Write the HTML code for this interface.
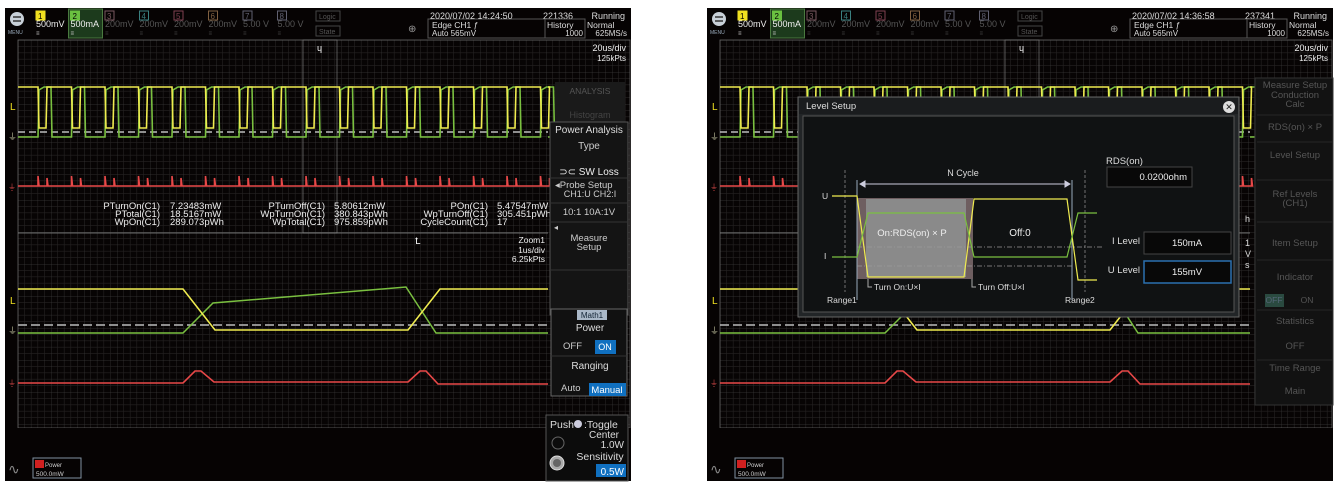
<!DOCTYPE html>
<html><head><meta charset="utf-8">
<style>
html,body{margin:0;padding:0;background:#fff;width:1339px;height:486px;overflow:hidden}
svg{display:block;font-family:"Liberation Sans Narrow","Liberation Sans",sans-serif}
text{font-family:"Liberation Sans Narrow","Liberation Sans",sans-serif}
</style></head><body>
<svg id="s" width="1339" height="486" viewBox="0 0 1339 486" xmlns="http://www.w3.org/2000/svg">
<defs>
<pattern id="g" x="18" y="40" width="33" height="32" patternUnits="userSpaceOnUse">
<rect width="33" height="32" fill="#070404"/>
<path d="M6.6 0V32M13.2 0V32M19.8 0V32M26.4 0V32M0 6.4H33M0 12.8H33M0 19.2H33M0 25.6H33" stroke="#242222" stroke-width="0.6"/>
<path d="M0 0V32M0 0H33" stroke="#3a3a3a" stroke-width="0.7"/>
</pattern>
</defs>
<g id="L"></g>
<g id="R"></g>
</svg>
<script>
const NS="http://www.w3.org/2000/svg";
function el(p,tag,a,txt){const e=document.createElementNS(NS,tag);for(const k in a)e.setAttribute(k,a[k]);if(txt!==undefined)e.textContent=txt;p.appendChild(e);return e;}
function T(p,x,y,s,c,t,anchor,extra){const a={x:x,y:y,'font-size':s,fill:c};if(anchor)a['text-anchor']=anchor;if(extra)Object.assign(a,extra);return el(p,'text',a,t);}
function screen(gid,ox,right){
 const g=document.getElementById(gid);
 g.setAttribute('transform','translate('+ox+',0)');
 el(g,'rect',{x:5,y:8,width:626,height:473,fill:'#060303'});
 el(g,'circle',{cx:17,cy:19,r:7,fill:'#c8d0d8'});
 el(g,'path',{d:'M13 17H21M13 21H21',stroke:'#333','stroke-width':1.6});
 T(g,8,34,5,'#9ab','MENU');
 const chs=[['1','500mV','#f0e020',true],['2','500mA','#6ac040',true],['3','200mV','#7a5a60'],['4','200mV','#3a8080'],['5','200mV','#804050'],['6','200mV','#806040'],['7','5.00 V','#606070'],['8','5.00 V','#606070']];
 chs.forEach((c,i)=>{const x=36+i*34.5;
  if(i==1)el(g,'rect',{x:x-2,y:9,width:34,height:29,fill:'#1c3a1c',stroke:'#4a7a40'});
  el(g,'rect',{x:x,y:11,width:9,height:9,fill:c[3]?c[2]:'none',stroke:c[2]});
  T(g,x+2,19,8,c[3]?'#000':c[2],c[0]);
  T(g,x,27,9,c[3]?'#eee':'#555',c[1]);
  T(g,x,35,6,c[3]?'#ccc':'#444','≡');});
 el(g,'rect',{x:316,y:11,width:24,height:10,fill:'none',stroke:'#444'});T(g,319,19,7,'#555','Logic');
 el(g,'rect',{x:316,y:26,width:24,height:10,fill:'none',stroke:'#444'});T(g,319,34,7,'#555','State');
 T(g,408,32,10,'#999','⊕');
 el(g,'rect',{x:428,y:19,width:117,height:19,fill:'none',stroke:'#555'});
 T(g,430,19,9,'#ddd',right?'2020/07/02 14:36:58':'2020/07/02 14:24:50');
 T(g,432,28,8.5,'#ddd','Edge CH1 ƒ');T(g,432,36,8,'#ddd','Auto 565mV');
 T(g,543,19,9,'#ddd',right?'237341':'221336');T(g,625,19,9,'#ddd','Running','end');
 el(g,'rect',{x:545,y:19,width:40,height:19,fill:'none',stroke:'#555'});
 T(g,547,28,8.5,'#ddd','History');T(g,583,36,8,'#ddd','1000','end');
 T(g,587,28,8.5,'#ddd','Normal');T(g,627,36,8,'#ddd','625MS/s','end');
 el(g,'rect',{x:18,y:40,width:612,height:388,fill:'url(#g)'});
 el(g,'rect',{x:18,y:40,width:612,height:388,fill:'none',stroke:'#666','stroke-width':0.8});
 T(g,626,51,9,'#eee','20us/div','end');T(g,626,61,8,'#eee','125kPts','end');
 el(g,'rect',{x:303,y:40,width:34,height:193,fill:'none',stroke:'#777','stroke-width':0.7});
 T(g,317,51,9,'#fff','ɥ');
 let y='M18 87',gr='M18 137',rd='M18 186';
 for(let i=0;i<16;i++){const c=24+i*33.5;
  y+=` L${c+14} 87 L${c+15} 128 L${c+22} 128 L${c+23} 87`;
  gr+=` L${c+14} 137 L${c+15} 90 L${c+20} 87`; gr+=` L${c+27} 87 L${c+28} 137`;
  rd+=` L${c+14} 186 L${c+14} 176 L${c+15} 186 L${c+23} 186 L${c+23} 178 L${c+24} 186`;}
 y+=' L548 87';gr+=' L548 137';rd+=' L548 186';
 el(g,'path',{d:'M18 132H548',stroke:'#bbb','stroke-width':1.6,'stroke-dasharray':'7 4'});
 el(g,'path',{d:gr,stroke:'#7ac040',fill:'none','stroke-width':1.6});
 el(g,'path',{d:y,stroke:'#f0ec50',fill:'none','stroke-width':1.6});
 el(g,'path',{d:rd,stroke:'#e84848',fill:'none','stroke-width':1.6});
 T(g,10,110,10,'#f0e020','L');T(g,8,140,9,'#bb9','⏚');T(g,8,190,8,'#c44','⏚');
 el(g,'path',{d:'M18 233H548',stroke:'#888','stroke-width':0.8});
 el(g,'path',{d:'M18 325H548',stroke:'#bbb','stroke-width':1.6,'stroke-dasharray':'9 4'});
 el(g,'path',{d:'M18 333 L183 333 L213 303 L406 287 L436 333 L548 333',stroke:'#7ac040',fill:'none','stroke-width':1.5});
 el(g,'path',{d:'M18 289 L183 289 L215 330 L408 330 L440 289 L548 289',stroke:'#f0ec50',fill:'none','stroke-width':1.6});
 el(g,'path',{d:'M18 383 L183 383 L195 371 L201 371 L214 382 L408 382 L420 371 L426 371 L438 384 L548 384',stroke:'#e84848',fill:'none','stroke-width':1.6});
 T(g,10,304,10,'#f0e020','L');T(g,8,334,9,'#bb9','⏚');T(g,8,386,8,'#c44','⏚');
 el(g,'rect',{x:5,y:428,width:626,height:53,fill:'#060303'});
 T(g,8,474,14,'#888','∿');
 el(g,'rect',{x:33,y:458,width:48,height:20,fill:'#060303',stroke:'#8090a0'});
 el(g,'rect',{x:35,y:460,width:9,height:8,fill:'#d02020'});
 T(g,45,467,6,'#ccc','Power');T(g,36,476,6.5,'#ccc','500.0mW');
}
screen('L',0,false);
screen('R',702,true);
const L=document.getElementById('L'),R=document.getElementById('R');
[['PTurnOn(C1)','7.23483mW'],['PTotal(C1)','18.5167mW'],['WpOn(C1)','289.073pWh']].forEach((r,i)=>{T(L,160,209+i*8,9.5,'#eee',r[0],'end');T(L,170,209+i*8,9.5,'#eee',r[1]);});
[['PTurnOff(C1)','5.80612mW'],['WpTurnOn(C1)','380.843pWh'],['WpTotal(C1)','975.859pWh']].forEach((r,i)=>{T(L,325,209+i*8,9.5,'#eee',r[0],'end');T(L,334,209+i*8,9.5,'#eee',r[1]);});
[['POn(C1)','5.47547mW'],['WpTurnOff(C1)','305.451pWh'],['CycleCount(C1)','17']].forEach((r,i)=>{T(L,488,209+i*8,9.5,'#eee',r[0],'end');T(L,497,209+i*8,9.5,'#eee',r[1]);});
T(L,415,244,9,'#fff','Ꝉ');
T(L,545,243,8.5,'#eee','Zoom1','end');T(L,545,253,8.5,'#eee','1us/div','end');T(L,545,262,8.5,'#eee','6.25kPts','end');
el(L,'rect',{x:555,y:82,width:70,height:40,fill:'#1a1a1a'});
T(L,590,94,8.5,'#555','ANALYSIS','middle');T(L,590,118,9,'#444','Histogram','middle');
el(L,'rect',{x:550,y:122,width:78,height:193,fill:'#141414',stroke:'#555'});
T(L,589,133,10,'#ddd','Power Analysis','middle');
T(L,589,149,10,'#ccc','Type','middle');
T(L,589,175,10,'#eee','⊃⊂ SW Loss','middle');
el(L,'path',{d:'M551 178H627M551 203H627M551 222H627M551 270H627',stroke:'#333'});
T(L,555,188,9.5,'#ccc','◂Probe Setup');T(L,590,197,9,'#ccc','CH1:U CH2:I','middle');
T(L,589,215,9.5,'#ccc','10:1 10A:1V','middle');
T(L,554,230,8,'#ccc','◂');T(L,589,241,9.5,'#ccc','Measure','middle');T(L,589,250,9.5,'#ccc','Setup','middle');
el(L,'rect',{x:551,y:309,width:76,height:87,fill:'#111',stroke:'#666'});
el(L,'rect',{x:577,y:310,width:30,height:10,fill:'#aab8c8'});T(L,592,318,8,'#123','Math1','middle');
T(L,590,331,10,'#ddd','Power','middle');
T(L,563,349,9.5,'#ccc','OFF');el(L,'rect',{x:595,y:340,width:21,height:14,fill:'#1070c0'});T(L,605,350,9,'#fff','ON','middle');
el(L,'path',{d:'M551 356H627',stroke:'#333'});
T(L,590,369,10,'#ddd','Ranging','middle');
T(L,561,391,9.5,'#ccc','Auto');el(L,'rect',{x:589,y:383,width:37,height:13,fill:'#1070c0'});T(L,607,393,9.5,'#fff','Manual','middle');
el(L,'rect',{x:546,y:415,width:82,height:66,fill:'#0c0c0c',stroke:'#555'});
T(L,550,428,10.5,'#ddd','Push');el(L,'circle',{cx:578,cy:424,r:4,fill:'#ccd'});T(L,584,428,10.5,'#ddd',':Toggle');
T(L,604,438,10,'#ddd','Center','middle');T(L,624,448,10,'#ddd','1.0W','end');
el(L,'circle',{cx:558,cy:443,r:6,fill:'none',stroke:'#666'});
T(L,600,460,10.5,'#ddd','Sensitivity','middle');
el(L,'circle',{cx:557,cy:463,r:7,fill:'#aaa',stroke:'#ddd'});el(L,'circle',{cx:557,cy:463,r:4,fill:'#666'});
el(L,'rect',{x:596,y:464,width:30,height:13,fill:'#1070c0'});T(L,624,475,10,'#fff','0.5W','end');
el(R,'rect',{x:553,y:78,width:78,height:327,fill:'#121212',stroke:'#333'});
const rp=[['Measure Setup',88],['Conduction',98],['Calc',107],['RDS(on) × P',130],['Level Setup',158],['Ref Levels',197],['(CH1)',206],['Item Setup',246],['Indicator',280],['Statistics',324],['OFF',349],['Time Range',371],['Main',394]];
rp.forEach(r=>T(R,593,r[1],9.5,'#555',r[0],'middle'));
el(R,'path',{d:'M555 115H631M555 142H631M555 180H631M555 222H631M555 260H631M555 310H631M555 360H631',stroke:'#252525'});
el(R,'rect',{x:563,y:294,width:19,height:13,fill:'#2a4a40'});T(R,572,303,8.5,'#567','OFF','middle');T(R,605,303,8.5,'#555','ON','middle');
const D=R;
el(D,'rect',{x:96,y:97,width:441,height:220,fill:'#222527',stroke:'#666'});
el(D,'rect',{x:97,y:98,width:439,height:16,fill:'#1a1c1e'});
T(D,104,109,9.5,'#ddd','Level Setup');
el(D,'circle',{cx:527,cy:107,r:6,fill:'#ddd'});T(D,527,110,9,'#222','✕','middle');
el(D,'rect',{x:101,y:116,width:431,height:196,fill:'#101213',stroke:'#555'});
el(D,'rect',{x:155,y:198,width:116,height:81,fill:'#6e5e60'});
el(D,'rect',{x:164,y:199,width:100,height:78,fill:'#8a8a8a'});
el(D,'path',{d:'M143 170V292M383 170V292',stroke:'#888','stroke-dasharray':'3 2','stroke-width':0.8});
el(D,'path',{d:'M155 180V300M370 180V300',stroke:'#99aabb','stroke-width':1});
el(D,'path',{d:'M158 184H368M158 184l5 -3v6zM368 184l-5 -3v6z',stroke:'#ccd',fill:'#ccd'});
T(D,261,176,9,'#ddd','N Cycle','middle');
el(D,'path',{d:'M155 247H400M155 266H370',stroke:'#999','stroke-dasharray':'5 2 1 2','stroke-width':0.7});
el(D,'path',{d:'M130 196H155 L166 277 L262 277 L272 199 L365 199 L376 280 L395 280',stroke:'#f0ec50',fill:'none','stroke-width':1.2});
el(D,'path',{d:'M130 257H155 L166 213 L262 213 L272 257 L365 257 L376 213 L395 213',stroke:'#7ac040',fill:'none','stroke-width':1.2});
T(D,120,199,8.5,'#ddd','U');T(D,122,259,8.5,'#ddd','I');
T(D,210,236,9.5,'#eee','On:RDS(on) × P','middle');T(D,318,236,10,'#eee','Off:0','middle');
el(D,'path',{d:'M166 279V287H170M270 279V287H274',stroke:'#aaa',fill:'none'});
T(D,172,290,8.5,'#ddd','Turn On:U×I');T(D,276,290,8.5,'#ddd','Turn Off:U×I');
T(D,125,303,8.5,'#ddd','Range1');T(D,363,303,8.5,'#ddd','Range2');
T(D,404,164,9.5,'#ddd','RDS(on)');
el(D,'rect',{x:405,y:167,width:85,height:20,fill:'#080808',stroke:'#444'});T(D,485,180,9.5,'#eee','0.0200ohm','end');
T(D,438,244,9.5,'#ddd','I Level','end');el(D,'rect',{x:442,y:232,width:87,height:22,fill:'#080808',stroke:'#444'});T(D,485,246,9.5,'#eee','150mA','middle');
T(D,438,273,9.5,'#ddd','U Level','end');el(D,'rect',{x:442,y:261,width:87,height:22,fill:'#080808',stroke:'#2a70b0','stroke-width':1.5});T(D,485,275,9.5,'#eee','155mV','middle');
T(D,543,222,9,'#ddd','h');T(D,543,246,9,'#ddd','1');T(D,543,257,9,'#ddd','V');T(D,543,268,9,'#ddd','s');
</script>
</body></html>
